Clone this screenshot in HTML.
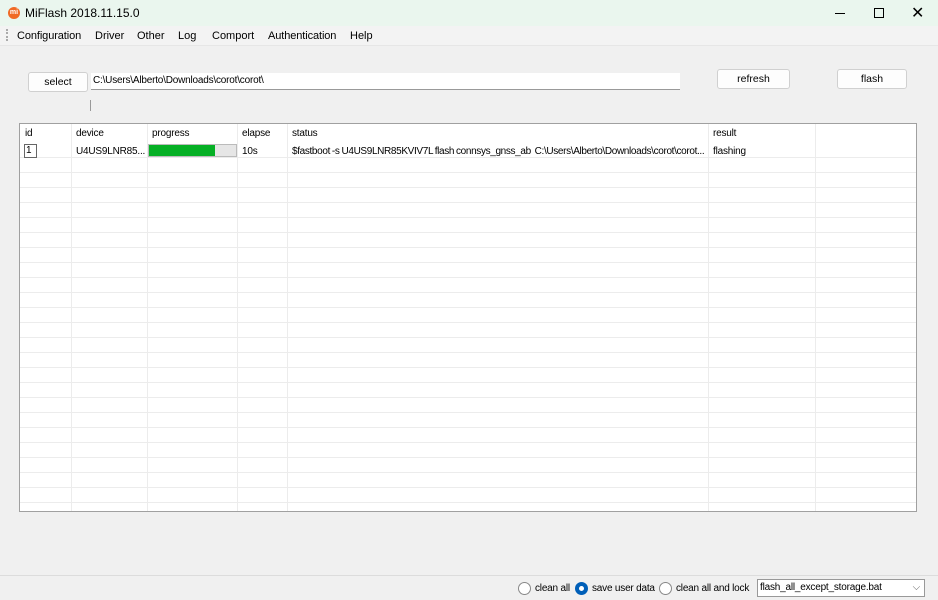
<!DOCTYPE html><html><head><style>
body{margin:0;width:938px;height:600px;background:#f0f0f0;font-family:"Liberation Sans",sans-serif;font-size:11px;position:relative;overflow:hidden;color:#000}
.a{position:absolute;white-space:nowrap}
.n{font-size:10px;letter-spacing:-0.2px}
.btn{position:absolute;background:#fdfdfd;border:1px solid #d0d0d0;border-radius:3px;text-align:center;font-size:10.5px;box-sizing:border-box}
.grid{position:absolute;left:19px;top:123px;width:898px;height:389px;background:#fff;border:1px solid #a0a0a0;box-sizing:border-box;overflow:hidden;
background-image:repeating-linear-gradient(to bottom,#ececec 0,#ececec 1px,transparent 1px,transparent 15px);background-position:0 33px;background-repeat:no-repeat;background-size:100% 400px}
.v{position:absolute;top:0;width:1px;height:388px;background:#ececec}
.rad{position:absolute;width:11px;height:11px;border:1px solid #888;border-radius:50%;background:#fff;top:582px}
</style></head><body>
<div class="a" style="left:0;top:0;width:938px;height:26px;background:#eaf6ee"></div>
<div class="a" style="left:8px;top:7px;width:12px;height:12px;border-radius:50%;background:#f06a25;color:#fff;font-size:7px;line-height:12px;text-align:center;font-weight:bold">mi</div>
<div class="a" style="left:25px;top:6px;font-size:12px">MiFlash 2018.11.15.0</div>
<div class="a" style="left:835px;top:13px;width:10px;height:1px;background:#000"></div>
<div class="a" style="left:874px;top:8px;width:8px;height:8px;border:1px solid #000"></div>
<div class="a" style="left:911px;top:3px;font-size:16px">✕</div>
<div class="a" style="left:0;top:26px;width:938px;height:19px;background:#f3f3f3;border-bottom:1px solid #e6e6e6"></div>
<div class="a" style="left:6px;top:29px;width:1px;height:12px;border-left:2px dotted #aaa"></div>
<div class="a" style="left:17px;top:30px;font-size:11px;letter-spacing:-0.1px">Configuration</div>
<div class="a" style="left:95px;top:30px;font-size:11px">Driver</div>
<div class="a" style="left:137px;top:30px;font-size:11px">Other</div>
<div class="a" style="left:178px;top:30px;font-size:11px">Log</div>
<div class="a" style="left:212px;top:30px;font-size:11px">Comport</div>
<div class="a" style="left:268px;top:30px;font-size:11px;letter-spacing:-0.1px">Authentication</div>
<div class="a" style="left:350px;top:30px;font-size:11px">Help</div>
<div class="btn" style="left:28px;top:72px;width:60px;height:20px;line-height:18px">select</div>
<div class="a n" style="left:91px;top:73px;width:589px;background:#fff;border-bottom:1px solid #999;line-height:15px;padding-left:2px;box-sizing:border-box;height:17px">C:\Users\Alberto\Downloads\corot\corot\</div>
<div class="btn" style="left:717px;top:69px;width:73px;height:20px;line-height:18px">refresh</div>
<div class="btn" style="left:837px;top:69px;width:70px;height:20px;line-height:18px">flash</div>
<div class="a" style="left:90px;top:100px;width:1px;height:11px;background:#999"></div>
<div class="grid">
<div class="v" style="left:51px"></div><div class="v" style="left:127px"></div><div class="v" style="left:217px"></div><div class="v" style="left:267px"></div><div class="v" style="left:688px"></div><div class="v" style="left:795px"></div>
<div class="a n" style="left:5px;top:4px">id</div><div class="a n" style="left:56px;top:4px">device</div><div class="a n" style="left:132px;top:4px">progress</div><div class="a n" style="left:222px;top:4px">elapse</div><div class="a n" style="left:272px;top:4px">status</div><div class="a n" style="left:693px;top:4px">result</div>
<div class="a" style="left:4px;top:20px;width:10px;height:12px;border:1px solid #666;line-height:12px;padding-left:1px;font-size:10px">1</div>
<div class="a n" style="left:56px;top:22px">U4US9LNR85...</div>
<div class="a" style="left:128px;top:20px;width:89px;height:13px;background:#e6e6e6;border:1px solid #bbb;box-sizing:border-box"><div style="width:66px;height:11px;background:#06b025"></div></div>
<div class="a n" style="left:222px;top:22px">10s</div>
<div class="a" style="left:272px;top:22px;font-size:10px;letter-spacing:-0.35px;word-spacing:-0.5px">$fastboot -s U4US9LNR85KVIV7L flash connsys_gnss_ab&nbsp; C:\Users\Alberto\Downloads\corot\corot...</div>
<div class="a n" style="left:693px;top:22px">flashing</div>
</div>
<div class="a" style="left:0;top:575px;width:938px;height:1px;background:#dcdcdc"></div>
<div class="rad" style="left:518px"></div>
<div class="a n" style="left:535px;top:583px">clean all</div>
<div class="rad" style="left:575px;border:4px solid #005fb8;width:5px;height:5px"></div>
<div class="a n" style="left:592px;top:583px">save user data</div>
<div class="rad" style="left:659px"></div>
<div class="a n" style="left:676px;top:583px">clean all and lock</div>
<div class="a n" style="left:757px;top:579px;width:168px;height:18px;background:#fff;border:1px solid #999;box-sizing:border-box;padding-left:2px;line-height:16px">flash_all_except_storage.bat<span style="position:absolute;right:4px;color:#666">⌵</span></div>
</body></html>
